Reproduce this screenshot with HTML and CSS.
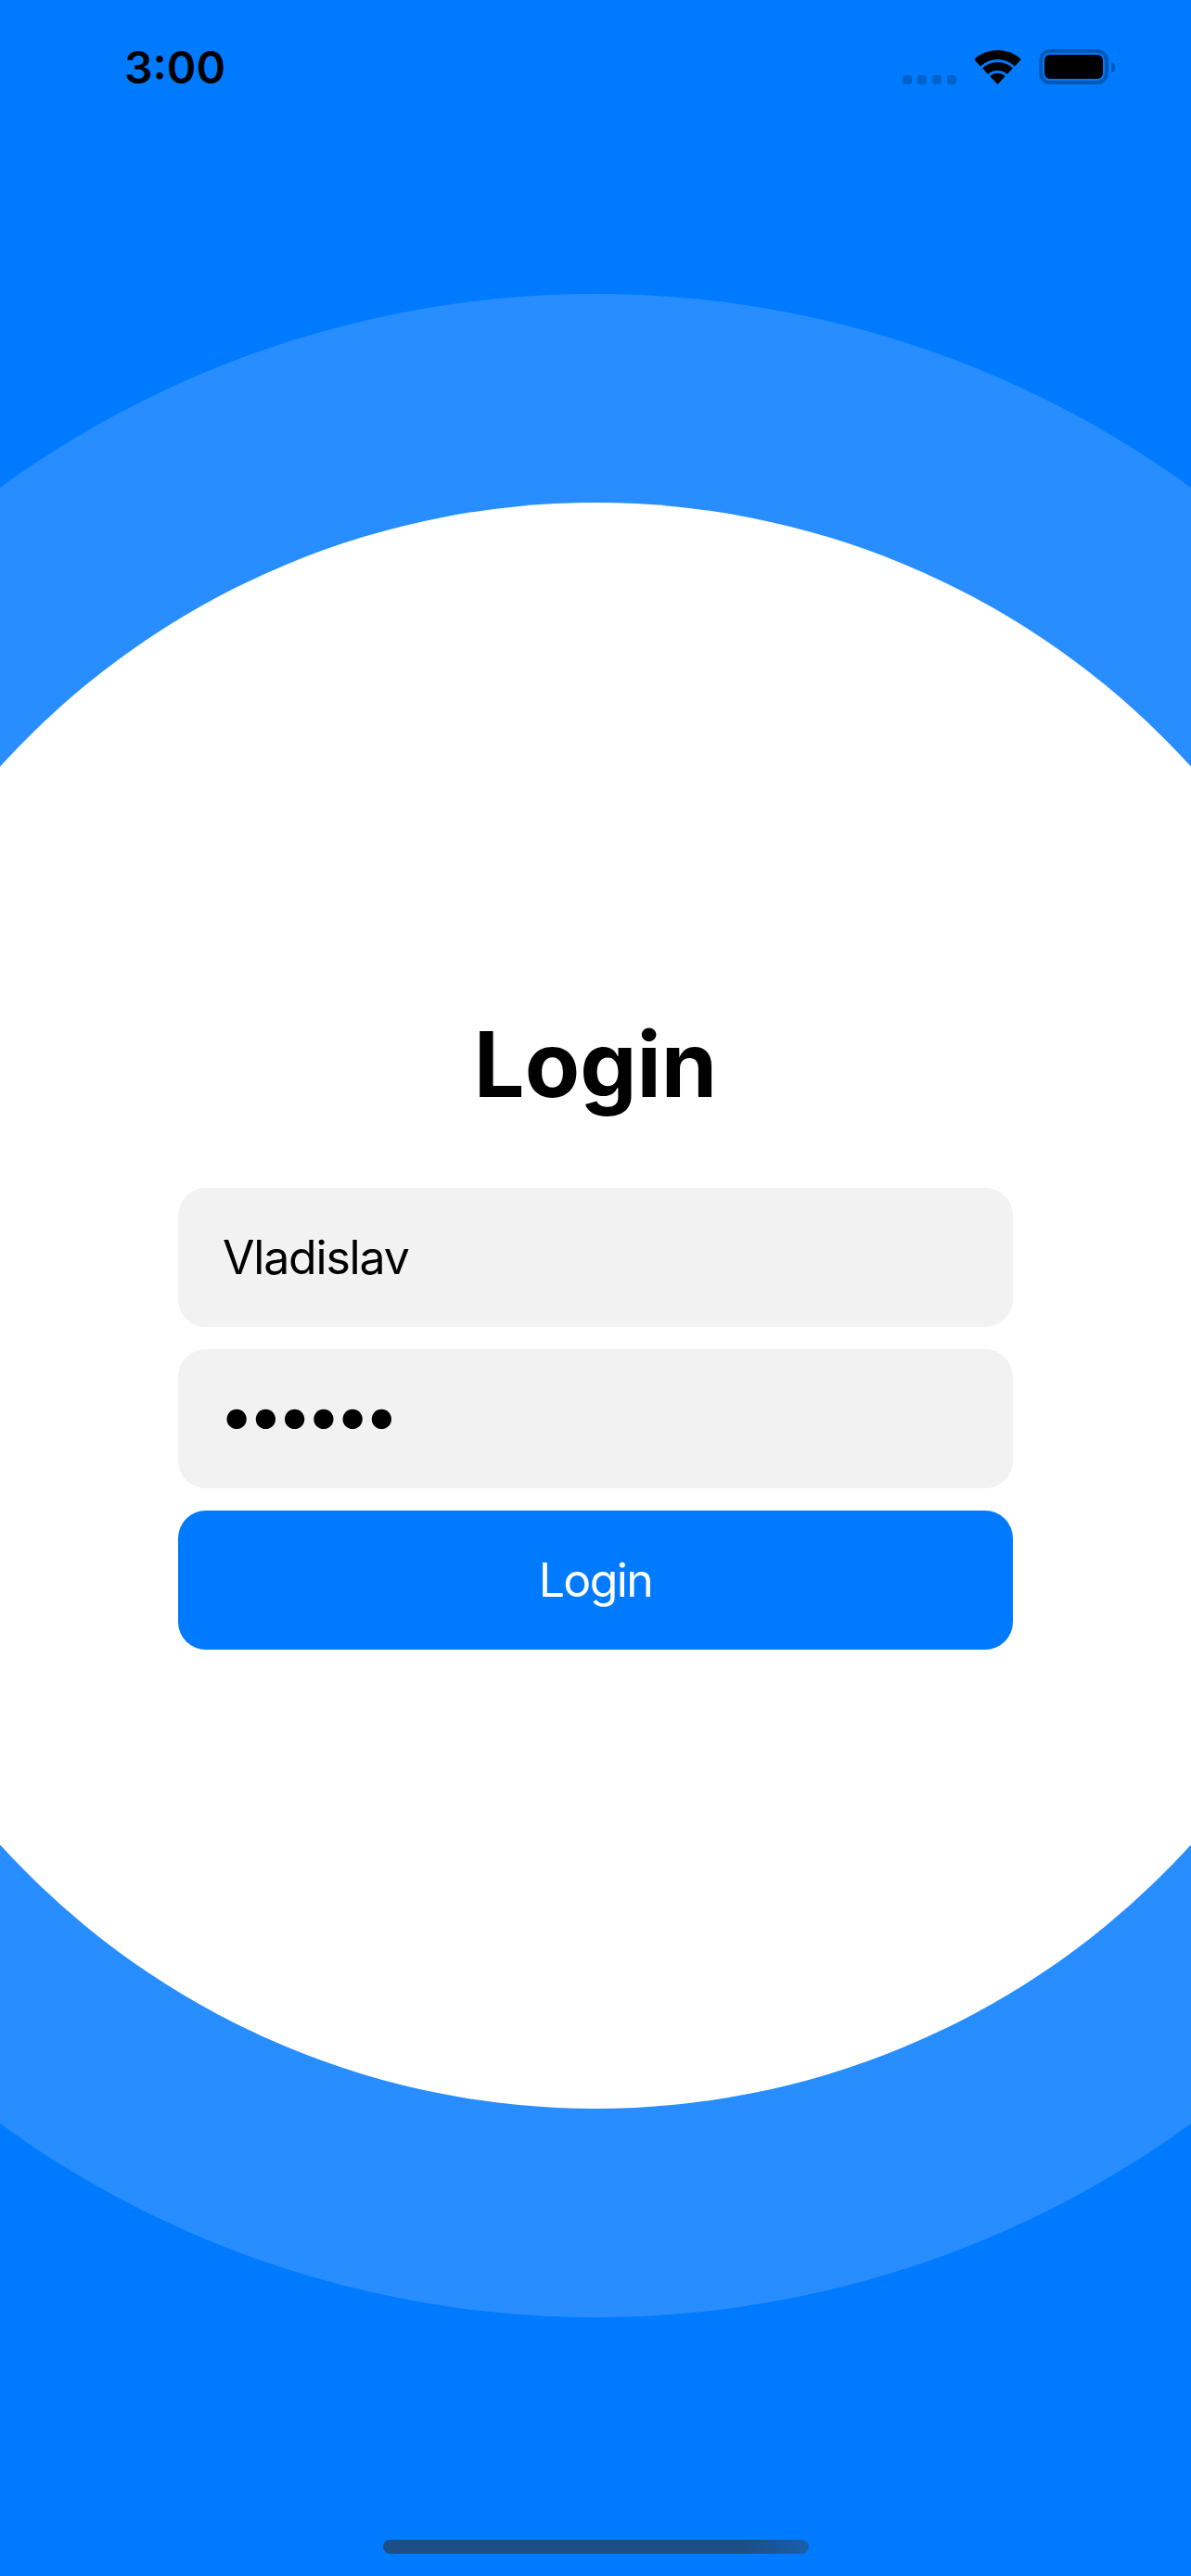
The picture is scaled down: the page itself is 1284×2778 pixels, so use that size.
FILE: index.html
```html
<!DOCTYPE html>
<html>
    <head>
        <title>Login</title>
        <link rel="stylesheet" href="styles.css">
    </head>
    <body>
        <div class="screen">
            <div class="ring">
                <div class="disc"></div>
            </div>
            <header class="status">
                <span class="time">3:00</span>
                <div class="status_icons">
                    <div class="signal">
                        <span></span><span></span><span></span><span></span>
                    </div>
                    <svg class="wifi" viewBox="0 0 51 37" width="51" height="37">
                        <path d="M.1 10.1A37 37 0 0 1 50.9 10.1L44 17.4A27 27 0 0 0 7 17.4Z"/>
                        <path d="M9 19.6A24 24 0 0 1 42 19.6L35.8 26.1A15 15 0 0 0 15.2 26.1Z"/>
                        <path d="M17.3 28.3A12 12 0 0 1 33.7 28.3L25.5 37Z"/>
                    </svg>
                    <div class="battery">
                        <div class="battery_level"></div>
                    </div>
                    <div class="battery_cap"></div>
                </div>
            </header>
            <main class="login">
                <h1>Login</h1>
                <div class="field">Vladislav</div>
                <div class="field password">••••••</div>
                <div class="button">Login</div>
            </main>
            <div class="home_bar"></div>
        </div>
    </body>
</html>
```

FILE: styles.css
```css
*{
margin: 0;
padding: 0;
box-sizing: border-box;
font-family: Inter, "Liberation Sans", sans-serif;
}
body{
background: #007aff;
}
.screen{
position: relative;
display: flex;
flex-direction: column;
width: 1284px;
height: 2778px;
overflow: hidden;
background: #007aff;
}
.ring{
position: absolute;
top: 317px;
left: -449px;
display: flex;
align-items: center;
justify-content: center;
width: 2182px;
height: 2182px;
border-radius: 50%;
background: #288eff;
}
.disc{
width: 1732px;
height: 1732px;
border-radius: 50%;
background: #fff;
}
.status{
position: relative;
display: flex;
align-items: flex-start;
justify-content: space-between;
height: 1000px;
padding: 44px 82px 0 134px;
}
.time{
font-size: 48px;
font-weight: 600;
line-height: 58px;
color: #000;
}
.status_icons{
display: flex;
align-items: flex-start;
padding-top: 9px;
}
.signal{
display: flex;
gap: 6px;
margin-top: 28px;
margin-right: 19px;
}
.signal span{
width: 10px;
height: 10px;
border-radius: 3px;
background: rgba(0,0,0,0.2);
}
.wifi{
display: block;
margin-top: 1px;
margin-right: 19px;
fill: #000;
}
.battery{
width: 75px;
height: 38px;
padding: 2px;
border: 4px solid rgba(0,0,0,0.28);
border-radius: 12px;
}
.battery_level{
width: 100%;
height: 100%;
border-radius: 6px;
background: #000;
}
.battery_cap{
width: 4px;
height: 11px;
margin-top: 14px;
margin-left: 3px;
border-radius: 0 6px 6px 0;
background: rgba(0,0,0,0.28);
}
.login{
position: relative;
display: flex;
flex-direction: column;
gap: 24px;
width: 900px;
margin: 0 auto;
padding-top: 88px;
}
h1{
margin-bottom: 49px;
font-size: 97px;
font-weight: 700;
line-height: 120px;
text-align: center;
color: #000;
}
.field{
height: 150px;
padding-left: 48px;
border-radius: 30px;
background: #f2f2f2;
font-size: 50px;
letter-spacing: -1.2px;
line-height: 151px;
color: #000;
}
.password{
padding-left: 44px;
font-size: 68px;
letter-spacing: -7px;
line-height: 141px;
}
.button{
height: 150px;
border-radius: 30px;
background: #007aff;
font-size: 50px;
letter-spacing: -1.6px;
line-height: 150px;
text-align: center;
color: #fff;
}
.home_bar{
position: relative;
width: 459px;
height: 15px;
margin: auto auto 24px;
border-radius: 8px;
background: linear-gradient(90deg, #1c4e86 0%, #1c4e86 85%, #1a5fae 100%);
}
```
